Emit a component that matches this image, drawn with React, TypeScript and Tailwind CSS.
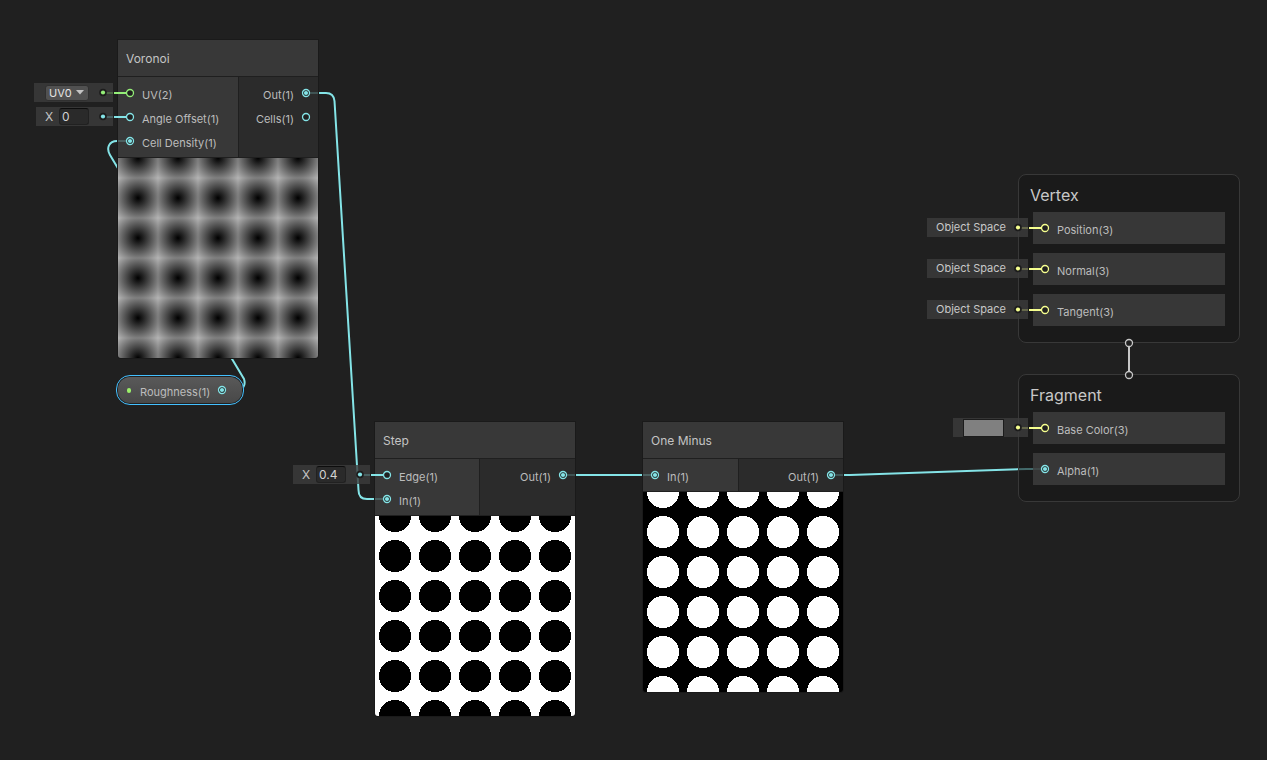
import { ReactNode } from 'react';

type Props = {
    children: ReactNode;
}

const CYAN = '#84e4e7';
const GREEN = '#94ee78';
const YELLOW = '#f6ff8f';

type PortProps = {
    color: string;
    connected?: boolean;
}

function Port({ color, connected }: PortProps) {
    return (
        <svg className="size-2 shrink-0 overflow-visible" viewBox="0 0 8 8">
            <circle cx="4" cy="4" r="3.5" fill="#202020" stroke={color} strokeWidth="1.3" />
            {connected && <circle cx="4" cy="4" r="2.1" fill={color} />}
        </svg>
    );
}

// Field panel hanging on the left of an unconnected input
function Slot({ color, children }: { color: string } & Props) {
    return (
        <div className="absolute inset-y-0 right-full mr-[5px] flex items-center">
            <div className="mb-px flex h-[19px] items-center bg-[#3c3c3c]/80 pl-[9px]">
                {children}
                <svg className="h-[19px] w-6 shrink-0 overflow-visible" viewBox="0 0 24 19">
                    <path d="M14 10H24" stroke={color} strokeOpacity="0.25" strokeWidth="2" />
                    <path d="M25 10H37" stroke={color} strokeWidth="2" />
                    <circle cx="14" cy="9.5" r="3.8" fill="#1c1c1c" />
                    <circle cx="14" cy="9.5" r="2.1" fill={color} />
                </svg>
            </div>
        </div>
    );
}

function FloatField({ id, value }: { id: string, value: string }) {
    return (
        <>
            <label htmlFor={id} className="w-[14px] text-xs text-[#c4c4c4]">X</label>
            <input
                id={id}
                defaultValue={value}
                className="h-[17px] w-[30px] rounded-[3px] border border-[#212121] border-t-[#0d0d0d] bg-[#2a2a2a] pl-[2px] text-xs text-[#d2d2d2] outline-none"
            />
        </>
    );
}

function ChannelSelect() {
    return (
        <div className="relative ml-[2px]">
            <select
                aria-label="UV channel"
                className="block h-4 w-11 appearance-none rounded-[3px] border border-[#303030] bg-[#515151] pl-[3px] text-[11px] leading-3 text-[#e4e4e4] outline-none"
            >
                <option>UV0</option>
                <option>UV1</option>
                <option>UV2</option>
                <option>UV3</option>
            </select>
            <svg className="pointer-events-none absolute right-[5px] top-[5px] h-[5px] w-2" viewBox="0 0 8 5">
                <path d="M0 0H8L4 4.6Z" fill="#c4c4c4" />
            </svg>
        </div>
    );
}

function PortLabel({ children }: Props) {
    return <span className="pt-[3px] text-[11px] leading-4 whitespace-nowrap text-[#bcbcbc]">{children}</span>;
}

type RowProps = PortProps & {
    label: string;
    slot?: ReactNode;
}

function InputRow({ label, color, connected, slot }: RowProps) {
    return (
        <div className="relative flex h-6 items-center gap-2 pl-2">
            {slot && <Slot color={color}>{slot}</Slot>}
            <Port color={color} connected={connected} />
            <PortLabel>{label}</PortLabel>
        </div>
    );
}

function OutputRow({ label, color, connected }: RowProps) {
    return (
        <div className="flex h-6 items-center justify-end gap-2 pr-2">
            <PortLabel>{label}</PortLabel>
            <Port color={color} connected={connected} />
        </div>
    );
}

type NodeProps = {
    title: string;
    place: string;
    inputWidth: string;
    inputs: ReactNode;
    outputs: ReactNode;
    preview: ReactNode;
}

function GraphNode({ title, place, inputWidth, inputs, outputs, preview }: NodeProps) {
    return (
        <section className={`absolute w-[200px] rounded-b-[3px] shadow-[0_0_0_1px_#1a1a1a] ${place}`}>
            <h2 className="flex h-9 items-center bg-[#3f3f3f]/80 pt-[2px] pl-2 text-xs text-[#c4c4c4]">{title}</h2>
            <div className="flex border-y border-[#1f1f1f]">
                <div className={`border-r border-[#1f1f1f] bg-[#3f3f3f]/80 py-1 ${inputWidth}`}>{inputs}</div>
                <div className="flex-1 bg-[#2e2e2e]/80 py-1">{outputs}</div>
            </div>
            <div className="h-[200px] overflow-hidden rounded-b-[3px]">{preview}</div>
        </section>
    );
}

const COLUMNS = [20, 60, 100, 140, 180];
const ROWS = [0, 40, 80, 120, 160, 200];

function DotsPreview({ back, front }: { back: string, front: string }) {
    return (
        <svg className="block size-full" viewBox="0 0 200 200" shapeRendering="crispEdges">
            <rect width="200" height="200" fill={back} />
            {ROWS.map((y) => COLUMNS.map((x) => (
                <circle key={`${x}-${y}`} cx={x} cy={y} r="16" fill={front} />
            )))}
        </svg>
    );
}

function VoronoiPreview() {
    return (
        <div className="size-full bg-[radial-gradient(circle_at_center,#000_0,#fff_40px)] bg-[length:40px_40px] bg-[position:0_20px]" />
    );
}

function Context({ title, place, children }: { title: string, place: string } & Props) {
    return (
        <section className={`absolute w-[222px] rounded-lg border border-[#383838] bg-[#181818]/60 px-[14px] pb-4 ${place}`}>
            <h2 className="-ml-[3px] flex h-[37px] items-center pt-[2px] text-base text-[#c8c8c8]">{title}</h2>
            <div className="flex flex-col gap-[9px]">{children}</div>
        </section>
    );
}

function Block({ label, color, connected, slot }: RowProps) {
    return (
        <div className="relative flex h-8 items-center gap-2 bg-[#3f3f3f]/80 pl-2">
            {slot && <Slot color={color}>{slot}</Slot>}
            <Port color={color} connected={connected} />
            <PortLabel>{label}</PortLabel>
        </div>
    );
}

function ObjectSpace() {
    return <span className="-mr-[2px] pb-px text-[11px] leading-4 whitespace-nowrap text-[#c8c8c8]">Object Space</span>;
}

function Wires() {
    return (
        <svg className="absolute left-0 top-0 overflow-visible" width="1267" height="760" fill="none" stroke={CYAN} strokeWidth="2">
            <path d="M306 93H326C332 93 334 96 334.5 101L358.5 490C358.5 496 361 499 367 499H387" />
            <path d="M563 475H655" />
            <path d="M831 475H850L1027 469H1045" />
            <path d="M223 390H237C243 390 246 385 244 379L110 155C106 148 109 141 117 141H130" />
        </svg>
    );
}

function StackLink() {
    return (
        <svg className="absolute left-[1124px] top-[338px]" width="10" height="42" fill="#202020" stroke="#c8c8c8">
            <path d="M5 8V34" strokeWidth="2" />
            <circle cx="5" cy="5" r="3.5" strokeWidth="1.3" />
            <circle cx="5" cy="37" r="3.5" strokeWidth="1.3" />
        </svg>
    );
}

function PropertyPill() {
    return (
        <div className="absolute left-[116px] top-[375px] rounded-[14px] border border-[#44c0ff] bg-[#202020] p-px">
            <div className="flex h-[26px] items-center gap-2 rounded-[12px] bg-linear-to-b from-[#595959] to-[#484848] pl-[9px] pr-4">
                <span className="mr-px h-[5px] w-1 rounded-full bg-[#9bf06a]" />
                <PortLabel>Roughness(1)</PortLabel>
                <Port color={CYAN} connected />
            </div>
        </div>
    );
}

export default function App() {
    return (
        <main className="relative min-h-screen w-full overflow-hidden bg-[#202020] font-['Inter',sans-serif]">
            <Wires />
            <GraphNode
                title="Voronoi"
                place="left-[118px] top-[40px]"
                inputWidth="w-[121px]"
                inputs={
                    <>
                        <InputRow label="UV(2)" color={GREEN} slot={<ChannelSelect />} />
                        <InputRow label="Angle Offset(1)" color={CYAN} slot={<FloatField id="angle-offset" value="0" />} />
                        <InputRow label="Cell Density(1)" color={CYAN} connected />
                    </>
                }
                outputs={
                    <>
                        <OutputRow label="Out(1)" color={CYAN} connected />
                        <OutputRow label="Cells(1)" color={CYAN} />
                    </>
                }
                preview={<VoronoiPreview />}
            />
            <PropertyPill />
            <GraphNode
                title="Step"
                place="left-[375px] top-[422px]"
                inputWidth="w-[105px]"
                inputs={
                    <>
                        <InputRow label="Edge(1)" color={CYAN} slot={<FloatField id="edge" value="0.4" />} />
                        <InputRow label="In(1)" color={CYAN} connected />
                    </>
                }
                outputs={<OutputRow label="Out(1)" color={CYAN} connected />}
                preview={<DotsPreview back="#fff" front="#000" />}
            />
            <GraphNode
                title="One Minus"
                place="left-[643px] top-[422px]"
                inputWidth="w-24"
                inputs={<InputRow label="In(1)" color={CYAN} connected />}
                outputs={<OutputRow label="Out(1)" color={CYAN} connected />}
                preview={<DotsPreview back="#000" front="#fff" />}
            />
            <Context title="Vertex" place="left-[1018px] top-[174px]">
                <Block label="Position(3)" color={YELLOW} slot={<ObjectSpace />} />
                <Block label="Normal(3)" color={YELLOW} slot={<ObjectSpace />} />
                <Block label="Tangent(3)" color={YELLOW} slot={<ObjectSpace />} />
            </Context>
            <Context title="Fragment" place="left-[1018px] top-[374px]">
                <Block
                    label="Base Color(3)"
                    color={YELLOW}
                    slot={
                        <input
                            type="button"
                            aria-label="Base color"
                            className="ml-px h-[18px] w-[41px] border border-[#1c1c1c] bg-[#808080]"
                        />
                    }
                />
                <Block label="Alpha(1)" color={CYAN} connected />
            </Context>
            <StackLink />
        </main>
    );
}
